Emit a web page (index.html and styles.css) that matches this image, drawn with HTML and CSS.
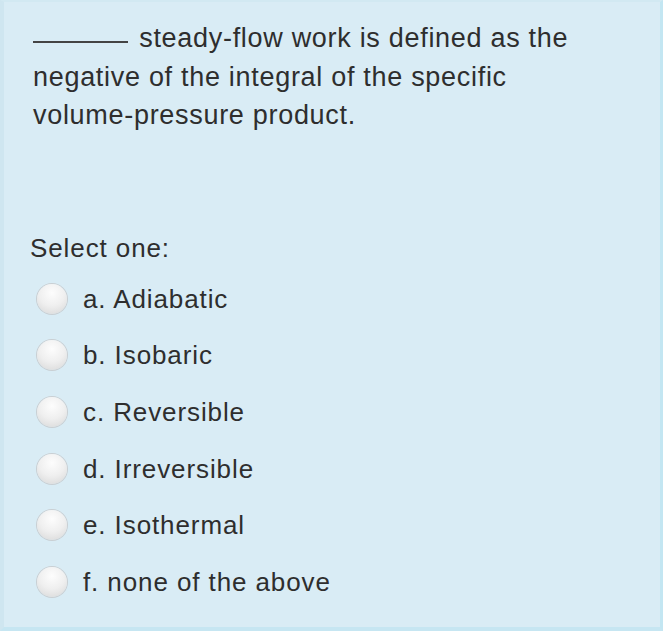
FILE: index.html
```html
<!DOCTYPE html>
<html>
<head>
<meta charset="utf-8">
<link rel="stylesheet" href="styles.css">
</head>
<body>
<div class="card">
  <p class="question"><span class="blank"></span> steady-flow work is defined as the negative of the integral of the specific volume-pressure product.</p>
  <div class="prompt">Select one:</div>
  <ul class="options">
    <li class="option"><span class="radio"></span><span class="label">a. Adiabatic</span></li>
    <li class="option"><span class="radio"></span><span class="label">b. Isobaric</span></li>
    <li class="option"><span class="radio"></span><span class="label">c. Reversible</span></li>
    <li class="option"><span class="radio"></span><span class="label">d. Irreversible</span></li>
    <li class="option"><span class="radio"></span><span class="label">e. Isothermal</span></li>
    <li class="option"><span class="radio"></span><span class="label">f. none of the above</span></li>
  </ul>
</div>
</body>
</html>
```
FILE: styles.css
```css
html, body {
  margin: 0;
  padding: 0;
  background: #d9ecf5;
}
.card {
  width: 663px;
  height: 631px;
  box-sizing: border-box;
  background: #d9ecf5;
  border-left: 4px solid #cfe6f0;
  border-top: 2px solid #d2e9f2;
  border-right: 3px solid #c3e6f2;
  border-bottom: 4px solid #c6e6f2;
  padding: 17px 10px 0 29px;
  font-family: "Liberation Sans", Arial, sans-serif;
  color: #2e2e2e;
  font-size: 26px;
  letter-spacing: 0.9px;
}
.question {
  margin: 0;
  font-size: 27px;
  letter-spacing: 0.7px;
  line-height: 38.5px;
  width: 545px;
}
.blank {
  display: inline-block;
  width: 95px;
  border-bottom: 2px solid #444;
  vertical-align: 4px;
  margin-right: 3px;
}
.prompt {
  margin-top: 94px;
  line-height: 38px;
  margin-left: -3px;
}
.options {
  list-style: none;
  margin: 4px 0 0 0;
  padding: 0;
}
.option {
  display: flex;
  align-items: center;
  height: 56.6px;
}
.radio {
  width: 30px;
  height: 30px;
  border-radius: 50%;
  margin-left: 4px;
  margin-right: 16px;
  background: radial-gradient(circle at 50% 30%, #fdfdfd 0%, #efefef 50%, #d6d6d6 100%);
  box-shadow: 0 0 0 1px #c9cfd3;
  flex: none;
}
.label {
  line-height: 30px;
}
```
